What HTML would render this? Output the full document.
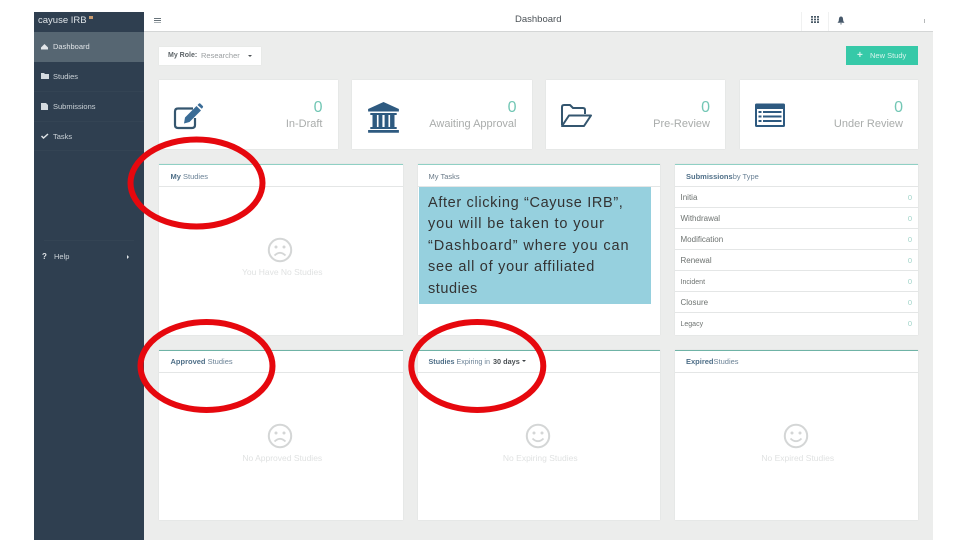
<!DOCTYPE html>
<html>
<head>
<meta charset="utf-8">
<style>
html,body{margin:0;padding:0;background:#fff}
body{width:960px;height:540px;position:relative;overflow:hidden;font-family:"Liberation Sans",sans-serif}
#ui{position:absolute;left:0;top:0;width:960px;height:540px;filter:blur(.35px)}
.a{position:absolute}
.t{position:absolute;white-space:nowrap;line-height:1}
.card{position:absolute;background:#fff;top:80px;height:69px;box-shadow:0 0 1px #cfd2d2}
.num{position:absolute;right:15px;top:19.5px;font-size:16px;line-height:1;color:#73c7b5}
.lab{position:absolute;right:15px;top:39px;font-size:11px;line-height:1;color:#a9acab;white-space:nowrap}
.panel{position:absolute;background:#fff;box-shadow:0 0 1px #cfd2d2;border-top:1px solid #8fd0c4;box-sizing:border-box}
.ph{position:absolute;left:0;right:0;top:0;height:21px;border-bottom:1px solid #e4e6e6}
.pt{position:absolute;left:12px;top:7.5px;font-size:7.5px;line-height:1;color:#6b8296;white-space:nowrap}
.pt b{color:#4f6f88;font-weight:bold}
.empty{position:absolute;left:3px;right:0;text-align:center;font-size:8.5px;line-height:1;color:#e0e2e2}
.row{position:absolute;left:0;right:0;height:20px;border-bottom:1px solid #e4e6e6}
.row span{position:absolute;left:6px;top:7px;font-size:8px;line-height:1;color:#6d7270}
.row i{position:absolute;right:6px;top:7px;font-size:7.5px;line-height:1;font-style:normal;color:#9fd3c8}
.nav{position:absolute;left:53px;font-size:7.5px;line-height:1;color:#ccd3d8;white-space:nowrap}
.note div{height:21.6px}
</style>
</head>
<body>
<div id="ui">
<div class="a" style="left:144px;top:31px;width:789px;height:509px;background:#ecedec"></div>
<div class="a" style="left:144px;top:12px;width:789px;height:19px;background:#fff;border-bottom:1px solid #d4d6d6;box-sizing:content-box"></div>

<!-- sidebar -->
<div class="a" style="left:34px;top:12px;width:110px;height:528px;background:#2f3f50"></div>
<div class="a" style="left:34px;top:32px;width:110px;height:30px;background:#566672"></div>
<div class="t" style="left:38px;top:15.5px;font-size:9.5px;color:#dfe4e8">cayuse IRB</div>
<div class="a" style="left:88.5px;top:16px;width:4px;height:2.5px;background:#c79a6e"></div>
<div class="a" style="left:34px;top:91px;width:110px;height:1px;background:#344454"></div>
<div class="a" style="left:34px;top:121px;width:110px;height:1px;background:#344454"></div>
<div class="a" style="left:34px;top:150px;width:110px;height:1px;background:#344454"></div>
<div class="a" style="left:44px;top:240px;width:90px;height:1px;background:#344454"></div>

<svg class="a" style="left:40px;top:42px" width="10" height="100" viewBox="0 0 10 100">
<path d="M1 5.5 L4.5 2 L8 5.5 V7.5 H1Z" fill="#e3e7ea"/>
<path d="M1 31 H4 L5 32 H9 V37 H1Z" fill="#d5dbe0"/>
<path d="M1 61 H6 L8 63 V68 H1Z" fill="#d5dbe0"/>
<path d="M1.5 94 L3.5 96 L8 92" fill="none" stroke="#dfe3e6" stroke-width="1.5"/>
</svg>
<div class="nav" style="top:42.5px;color:#e1e5e8">Dashboard</div>
<div class="nav" style="top:72.5px">Studies</div>
<div class="nav" style="top:102.5px">Submissions</div>
<div class="nav" style="top:132.5px">Tasks</div>
<div class="t" style="left:42px;top:252.5px;font-size:8px;font-weight:bold;color:#dfe3e6">?</div>
<div class="nav" style="left:54px;top:253px;font-size:7.5px">Help</div>
<div class="a" style="left:127px;top:255px;width:0;height:0;border-left:2px solid #e3e7ea;border-top:2px solid transparent;border-bottom:2px solid transparent"></div>

<!-- header -->
<div class="a" style="left:154px;top:18px;width:7px;height:1px;background:#68737a"></div>
<div class="a" style="left:154px;top:20px;width:7px;height:1px;background:#68737a"></div>
<div class="a" style="left:154px;top:22px;width:7px;height:1px;background:#a9b0b4"></div>
<div class="t" style="left:515px;top:15px;font-size:9.5px;color:#4c5257">Dashboard</div>
<div class="a" style="left:801px;top:12px;width:1px;height:19px;background:#f0f1f1"></div>
<div class="a" style="left:828px;top:12px;width:1px;height:19px;background:#f0f1f1"></div>
<svg class="a" style="left:811px;top:16px" width="8" height="7" viewBox="0 0 8 7"><path d="M0 0h2v1.800H0zM3 0h2v1.800H3zM6 0h2v1.800H6zM0 2.600h2v1.800H0zM3 2.600h2v1.800H3zM6 2.600h2v1.800H6zM0 5.200h2V7H0zM3 5.200h2V7H3zM6 5.200h2V7H6z" fill="#4b5b68"/></svg>
<svg class="a" style="left:837px;top:15.5px" width="8" height="9" viewBox="0 0 8 9"><path d="M4 0.500C2 .5 2 2.500 1.800 4.500 1.700 5.500 1 6 .5 6.800H7.500C7 6 6.300 5.500 6.200 4.500 6 2.500 6 .5 4 .5ZM3 7.500H5L4 8.800Z" fill="#46586a"/></svg>
<div class="a" style="left:924px;top:19px;width:1px;height:4px;background:#b5b8b9"></div>

<!-- role + button -->
<div class="a" style="left:159px;top:47px;width:102px;height:18px;background:#fff;box-shadow:0 0 1px #d8dada"></div>
<div class="t" style="left:168px;top:52px;font-size:7px;font-weight:bold;color:#5d6468">My Role:</div>
<div class="t" style="left:201px;top:52px;font-size:7.5px;color:#9a9ea0">Researcher</div>
<div class="a" style="left:248px;top:55px;width:0;height:0;border-top:2.5px solid #4d5357;border-left:2.5px solid transparent;border-right:2.5px solid transparent"></div>
<div class="a" style="left:846px;top:46px;width:72px;height:19px;background:#36c9a8"></div>
<div class="t" style="left:857px;top:51px;font-size:10px;font-weight:bold;color:#d7f4ec">+</div>
<div class="t" style="left:870px;top:52px;font-size:7.5px;color:#d7f4ec">New Study</div>

<!-- stat cards -->
<div class="card" style="left:158.5px;width:179px">
  <svg class="a" style="left:14.5px;top:23px" width="32" height="28" viewBox="0 0 32 28">
    <path d="M20 5.500H5Q2 5.500 2 8.500V22Q2 25 5 25H19Q22 25 22 22V15" fill="none" stroke="#35566f" stroke-width="2.200"/>
    <path d="M12 14.500 L23.500 3 L28 7.500 L16.500 19 L11 20.500Z" fill="#3a6c96"/>
    <path d="M24.500 2 L26 .5 Q26.800 0 27.500 .7 L29.800 3 Q30.500 3.800 29.800 4.500 L28.800 5.800Z" fill="#3a6c96"/>
  </svg>
  <div class="num">0</div><div class="lab">In-Draft</div>
</div>
<div class="card" style="left:352px;width:179.5px">
  <svg class="a" style="left:15px;top:21px" width="33" height="32" viewBox="0 0 30 32" preserveAspectRatio="none">
    <path d="M1 8 L15 1 L29 8 V10.500 H1Z" fill="#2e5a80"/>
    <path d="M3 12h24v2H3zM5 14h4v12H5zM10.500 14H14v12h-3.500zM16 14h3.500v12H16zM21 14h4v12h-4zM3 26h24v2H3zM1 29h28v2.800H1z" fill="#2e5a80"/>
  </svg>
  <div class="num">0</div><div class="lab">Awaiting Approval</div>
</div>
<div class="card" style="left:545.5px;width:179.5px">
  <svg class="a" style="left:14.5px;top:23px" width="34" height="26" viewBox="0 0 34 26">
    <path d="M2 22V4Q2 2 4 2H10L13 5H23Q25 5 25 7V11M2 23H24L31 12.500H9L2 23Z" fill="none" stroke="#34566f" stroke-width="2" stroke-linejoin="round"/>
  </svg>
  <div class="num">0</div><div class="lab">Pre-Review</div>
</div>
<div class="card" style="left:739.5px;width:178.5px">
  <svg class="a" style="left:14.5px;top:23px" width="32" height="25" viewBox="0 0 32 25">
    <rect x="1" y="0.500" width="30" height="23.500" rx="1.500" fill="#2e5a80"/>
    <rect x="3" y="6" width="26" height="16" fill="#fff"/>
    <path d="M4.500 8h3v2h-3zM4.500 12.500h3v2h-3zM4.500 17h3v2h-3zM9 8h18.500v2H9zM9 12.500h18.500v2H9zM9 17h18.500v2H9z" fill="#2e5a80"/>
  </svg>
  <div class="num">0</div><div class="lab">Under Review</div>
</div>

<!-- row 1 panels -->
<div class="panel" style="left:158.5px;top:164px;width:244.5px;height:171px">
  <div class="ph"></div><div class="pt"><b>My</b> Studies</div>
  <svg class="a" style="left:108.500px;top:72px" width="26" height="26" viewBox="0 0 26 26"><circle cx="13" cy="13" r="11.200" fill="none" stroke="#d4d6d6" stroke-width="2"/><circle cx="9" cy="10" r="1.500" fill="#d4d6d6"/><circle cx="17" cy="10" r="1.500" fill="#d4d6d6"/><path d="M7.500 18.500Q13 13 18.500 18.500" fill="none" stroke="#d4d6d6" stroke-width="1.800"/></svg>
  <div class="empty" style="top:103px">You Have No Studies</div>
</div>
<div class="panel" style="left:417.5px;top:164px;width:242.5px;height:171px">
  <div class="ph"></div><div class="pt" style="left:11px;color:#6a7a88">My Tasks</div>
</div>
<div class="panel" style="left:674.5px;top:164px;width:243.5px;height:171px">
  <div class="ph"></div><div class="pt" style="left:11.5px"><b>Submissions</b>by Type</div>
  <div class="row" style="top:22px"><span>Initia</span><i>0</i></div>
  <div class="row" style="top:43px"><span>Withdrawal</span><i>0</i></div>
  <div class="row" style="top:64px"><span>Modification</span><i>0</i></div>
  <div class="row" style="top:85px"><span>Renewal</span><i>0</i></div>
  <div class="row" style="top:106px"><span style="font-size:7px;top:8px">Incident</span><i>0</i></div>
  <div class="row" style="top:127px"><span>Closure</span><i>0</i></div>
  <div class="row" style="top:148px;border:0"><span style="font-size:7px;top:8px">Legacy</span><i>0</i></div>
</div>

<!-- row 2 panels -->
<div class="panel" style="left:158.5px;top:350px;width:244.5px;height:170px;border-top-color:#6fb3a6">
  <div class="ph"></div><div class="pt" style="top:7px"><b>Approved</b> Studies</div>
  <svg class="a" style="left:108.500px;top:72px" width="26" height="26" viewBox="0 0 26 26"><circle cx="13" cy="13" r="11.200" fill="none" stroke="#d4d6d6" stroke-width="2"/><circle cx="9" cy="10" r="1.500" fill="#d4d6d6"/><circle cx="17" cy="10" r="1.500" fill="#d4d6d6"/><path d="M7.500 18.500Q13 13 18.500 18.500" fill="none" stroke="#d4d6d6" stroke-width="1.800"/></svg>
  <div class="empty" style="top:103px">No Approved Studies</div>
</div>
<div class="panel" style="left:417.5px;top:350px;width:242.5px;height:170px;border-top-color:#6fb3a6">
  <div class="ph"></div><div class="pt" style="left:11px;top:7px;font-size:7.2px"><b>Studies</b> Expiring in</div>
  <div class="t" style="left:75.5px;top:7px;font-size:7.3px;color:#4a4f53;font-weight:bold">30 days</div>
  <div class="a" style="left:104px;top:9px;width:0;height:0;border-top:2.5px solid #3d4246;border-left:2.5px solid transparent;border-right:2.5px solid transparent"></div>
  <svg class="a" style="left:107.500px;top:72px" width="26" height="26" viewBox="0 0 26 26"><circle cx="13" cy="13" r="11.200" fill="none" stroke="#d4d6d6" stroke-width="2"/><circle cx="9" cy="10" r="1.500" fill="#d4d6d6"/><circle cx="17" cy="10" r="1.500" fill="#d4d6d6"/><path d="M7.500 15.500Q13 21 18.500 15.500" fill="none" stroke="#d4d6d6" stroke-width="1.800"/></svg>
  <div class="empty" style="top:103px">No Expiring Studies</div>
</div>
<div class="panel" style="left:674.5px;top:350px;width:243.5px;height:170px;border-top-color:#6fb3a6">
  <div class="ph"></div><div class="pt" style="left:11.5px;top:7px"><b>Expired</b>Studies</div>
  <svg class="a" style="left:108.500px;top:71.500px" width="26" height="26" viewBox="0 0 26 26"><circle cx="13" cy="13" r="11.200" fill="none" stroke="#d4d6d6" stroke-width="2"/><circle cx="9" cy="10" r="1.500" fill="#d4d6d6"/><circle cx="17" cy="10" r="1.500" fill="#d4d6d6"/><path d="M7.500 15.500Q13 21 18.500 15.500" fill="none" stroke="#d4d6d6" stroke-width="1.800"/></svg>
  <div class="empty" style="top:103px">No Expired Studies</div>
</div>
</div>

<!-- annotation box -->
<div class="a" style="left:419px;top:187px;width:232px;height:117px;background:#96d0de"></div>
<div class="a note" style="left:428px;top:192.5px;width:222px;font-size:14.5px;line-height:21.6px;color:#333;white-space:nowrap">
<div style="letter-spacing:.65px">After clicking “Cayuse IRB”,</div>
<div style="letter-spacing:.85px">you will be taken to your</div>
<div style="letter-spacing:.9px">“Dashboard” where you can</div>
<div style="letter-spacing:.73px">see all of your affiliated</div>
<div style="letter-spacing:.55px">studies</div>
</div>

<!-- red ellipses -->
<svg class="a" style="left:0;top:0" width="960" height="540" viewBox="0 0 960 540">
  <g fill="none" stroke="#e6080e" stroke-width="6">
    <ellipse cx="196.5" cy="183" rx="66" ry="43.500"/>
    <ellipse cx="206.5" cy="366" rx="66" ry="44"/>
    <ellipse cx="477.3" cy="366" rx="66" ry="44"/>
  </g>
</svg>
</body>
</html>
